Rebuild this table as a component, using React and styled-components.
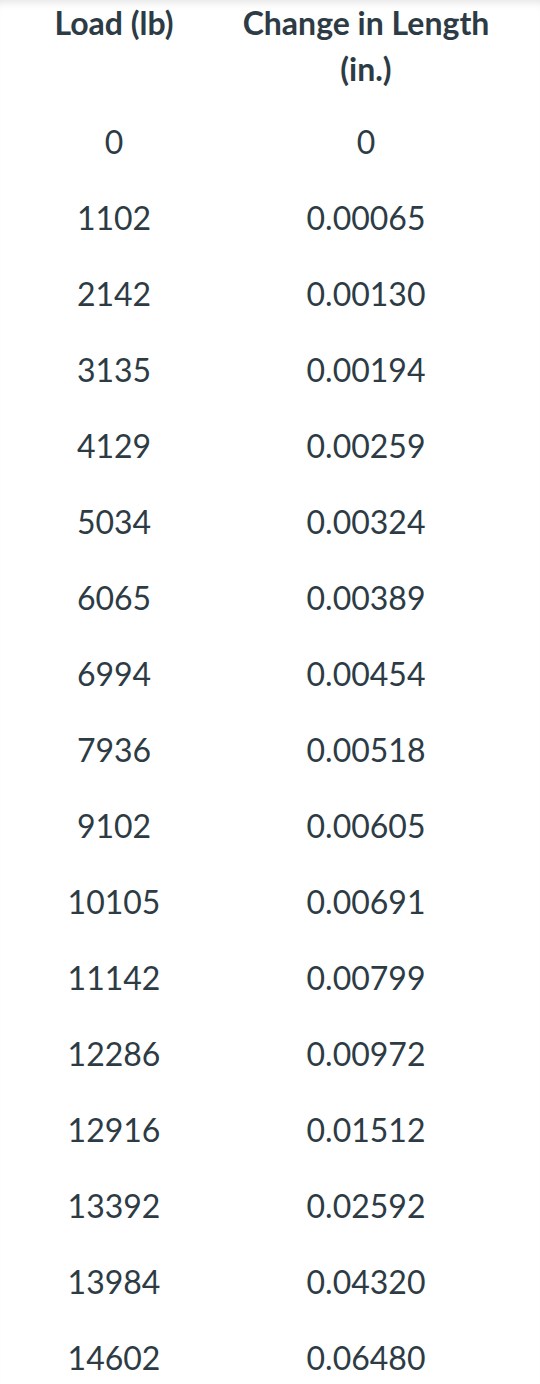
import React from "react";
import styled, { createGlobalStyle } from "styled-components";

const GlobalStyle = createGlobalStyle`
  html, body {
    margin: 0;
    padding: 0;
    background: #ffffff;
  }
  body {
    font-family: Lato, "Open Sans", sans-serif;
    color: #2d3b45;
  }
`;

const Page = styled.div`
  position: relative;
  width: 540px;
  min-height: 1384px;
  background: #ffffff;
  box-shadow: inset 0 8px 8px -6px rgba(0, 0, 0, 0.12);
`;

const Table = styled.div`
  display: grid;
  grid-template-columns: 228px 276px;
`;

const HeadCell = styled.div`
  font-weight: 700;
  font-size: 32px;
  line-height: 46px;
  text-align: center;
  padding: 0 6px 12px;
`;

const Cell = styled.div`
  font-size: 32px;
  line-height: 46px;
  text-align: center;
  padding: 15px 6px;
`;

const rows = [
  ["0", "0"],
  ["1102", "0.00065"],
  ["2142", "0.00130"],
  ["3135", "0.00194"],
  ["4129", "0.00259"],
  ["5034", "0.00324"],
  ["6065", "0.00389"],
  ["6994", "0.00454"],
  ["7936", "0.00518"],
  ["9102", "0.00605"],
  ["10105", "0.00691"],
  ["11142", "0.00799"],
  ["12286", "0.00972"],
  ["12916", "0.01512"],
  ["13392", "0.02592"],
  ["13984", "0.04320"],
  ["14602", "0.06480"],
];

const App = () => {
  return (
    <Page>
      <GlobalStyle />
      <Table>
        <HeadCell>Load (lb)</HeadCell>
        <HeadCell>Change in Length (in.)</HeadCell>
        {rows.map(([load, change]) => (
          <React.Fragment key={load}>
            <Cell>{load}</Cell>
            <Cell>{change}</Cell>
          </React.Fragment>
        ))}
      </Table>
    </Page>
  );
};

export default App;
